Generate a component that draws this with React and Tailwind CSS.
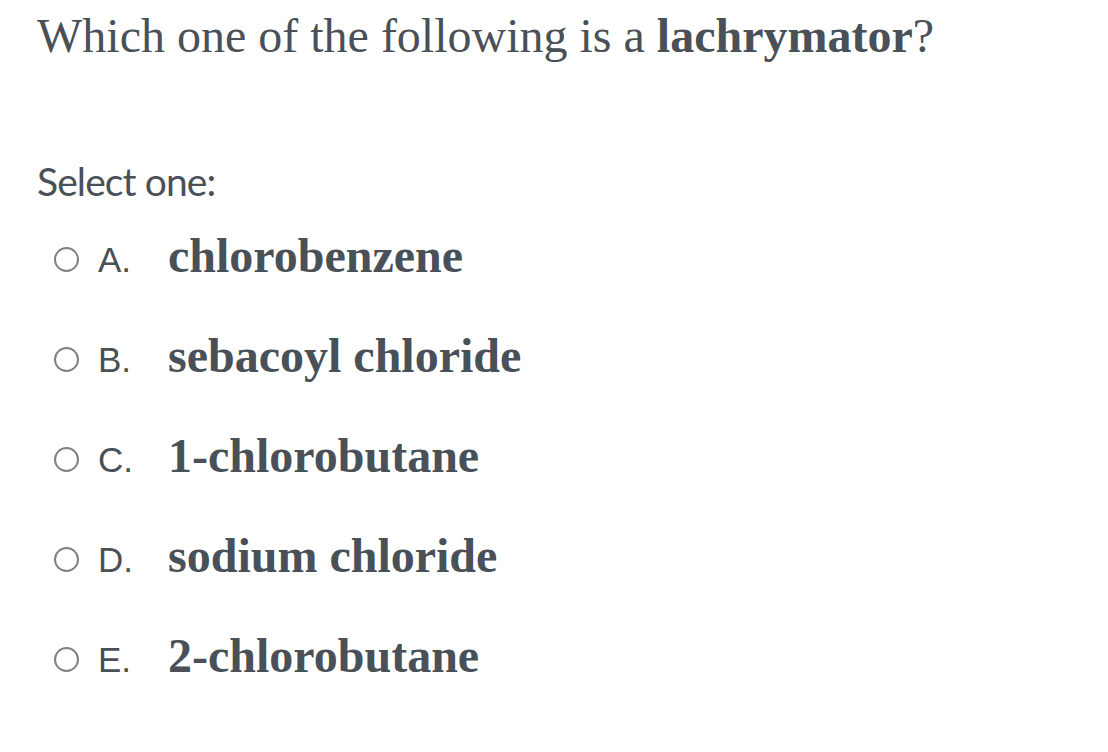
const options = [
  { letter: 'A.', text: 'chlorobenzene' },
  { letter: 'B.', text: 'sebacoyl chloride' },
  { letter: 'C.', text: '1-chlorobutane' },
  { letter: 'D.', text: 'sodium chloride' },
  { letter: 'E.', text: '2-chlorobutane' },
];

export default function App() {
  return (
    <div className="w-[1108px] h-[752px] bg-white text-[#495057] overflow-hidden">
      <div className="pl-[37px] pt-[6px]">
        <h1 className="font-['Liberation_Serif',serif] text-[48px] leading-[60px]">
          Which one of the following is a <b>lachrymator</b>?
        </h1>
        <p className="mt-[91px] font-['Lato',sans-serif] text-[39px] leading-[48px] tracking-[-0.9px]">
          Select one:
        </p>
        <div className="mt-[1px] flex flex-col">
          {options.map((o) => (
            <label key={o.letter} className="flex items-baseline h-[100px] leading-[100px]">
              <span className="ml-[17px] mb-[17px] w-[25px] h-[25px] rounded-full border-[2px] border-[#808080] bg-white shrink-0" />
              <span className="ml-[19px] w-[70px] font-['Liberation_Sans',sans-serif] text-[35px]">{o.letter}</span>
              <span className="font-['Liberation_Serif',serif] font-bold text-[48px]">{o.text}</span>
            </label>
          ))}
        </div>
      </div>
    </div>
  );
}
